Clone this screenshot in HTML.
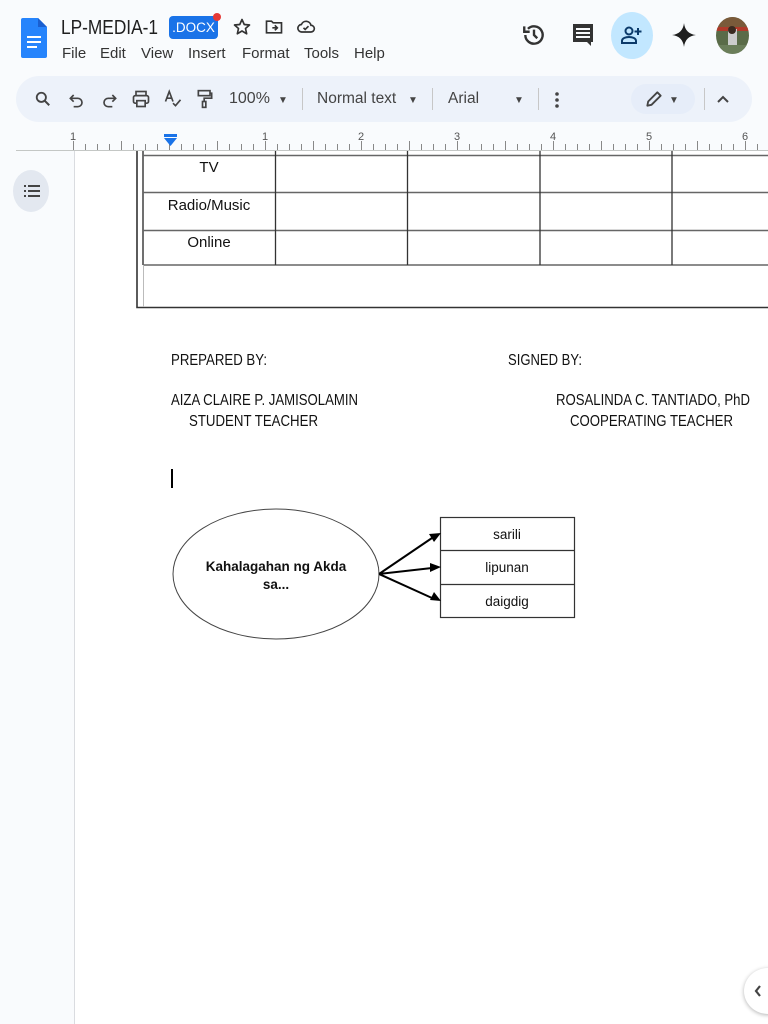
<!DOCTYPE html>
<html><head><meta charset="utf-8">
<style>
*{margin:0;padding:0;box-sizing:border-box}
body{width:768px;height:1024px;overflow:hidden;background:#f9fbfd;font-family:"Liberation Sans",Arial,sans-serif;position:relative;color:#1f1f1f}
.abs{position:absolute}
.menu span{position:absolute;top:45px;font-size:15px;color:#333}
.tb{position:absolute;left:16px;top:76px;width:736px;height:46px;border-radius:23px;background:#edf2fa}
.tbt{position:absolute;top:90px;font-size:15.5px;color:#444}
.sep{position:absolute;top:88px;width:1px;height:22px;background:#c7c7c7}
</style></head><body>
<svg class="abs" style="left:20px;top:17px" width="28" height="42" viewBox="0 0 28 42">
<path d="M3 1h15l9 9v29a2 2 0 0 1-2 2H3a2 2 0 0 1-2-2V3a2 2 0 0 1 2-2z" fill="#2684fc"/>
<path d="M18 1v9h9z" fill="#1a5fd0"/>
<rect x="7" y="19" width="14" height="2" fill="#fff"/><rect x="7" y="24" width="14" height="2" fill="#fff"/><rect x="7" y="29" width="10" height="2" fill="#fff"/>
</svg>
<svg class="abs" style="left:60px;top:12px" width="105" height="30"><text x="1" y="22" font-family="Liberation Sans,Arial,sans-serif" font-size="20" fill="#1f1f1f" textLength="97" lengthAdjust="spacingAndGlyphs">LP-MEDIA-1</text></svg>
<div class="abs" style="left:169px;top:16px;width:49px;height:23px;background:#1a73e8;border-radius:4px;color:#fff;font-size:13.5px;line-height:23px;text-align:center">.DOCX</div>
<div class="abs" style="left:213px;top:13px;width:8px;height:8px;border-radius:50%;background:#e53935"></div>
<svg class="abs" style="left:232px;top:17px" width="20" height="20" viewBox="0 0 24 24"><path d="M12 3l2.7 6 6.3.6-4.8 4.2 1.4 6.3L12 16.8 6.4 20.1l1.4-6.3L3 9.6l6.3-.6z" fill="none" stroke="#333" stroke-width="2" stroke-linejoin="round"/></svg>
<svg class="abs" style="left:264px;top:17px" width="20" height="20" viewBox="0 0 24 24"><path d="M3 5h6l2 2h10v12H3z" fill="none" stroke="#333" stroke-width="2"/><path d="M10 13h6M13 10l3 3-3 3" fill="none" stroke="#333" stroke-width="2"/></svg>
<svg class="abs" style="left:296px;top:17px" width="20" height="20" viewBox="0 0 24 24"><path d="M7 18h11a4 4 0 0 0 0-8 6 6 0 0 0-11.5-1A4.5 4.5 0 0 0 7 18z" fill="none" stroke="#333" stroke-width="2"/><path d="M9 13l2 2 4-4" fill="none" stroke="#333" stroke-width="2"/></svg>
<div class="menu"><span style="left:62px">File</span><span style="left:100px">Edit</span><span style="left:141px">View</span><span style="left:188px">Insert</span><span style="left:242px">Format</span><span style="left:304px">Tools</span><span style="left:354px">Help</span></div>
<svg class="abs" style="left:521px;top:22px" width="26" height="26" viewBox="0 0 24 24"><path d="M4 12a8 8 0 1 0 2.4-5.7" fill="none" stroke="#333" stroke-width="2.2"/><path d="M3 4v5h5" fill="none" stroke="#333" stroke-width="2.2"/><path d="M12 7v5l3 3" fill="none" stroke="#333" stroke-width="2.2"/></svg>
<svg class="abs" style="left:571px;top:22px" width="24" height="26" viewBox="0 0 24 26"><path d="M2 2h20v18h-2v4l-4-4H2z" fill="#333"/><rect x="5" y="6" width="14" height="2" fill="#f9fbfd"/><rect x="5" y="10" width="14" height="2" fill="#f9fbfd"/><rect x="5" y="14" width="14" height="2" fill="#f9fbfd"/></svg>
<div class="abs" style="left:611px;top:12px;width:42px;height:47px;border-radius:50%;background:#c2e7ff"></div>
<svg class="abs" style="left:621px;top:25px" width="22" height="20" viewBox="0 0 22 20"><circle cx="8" cy="6" r="3.5" fill="none" stroke="#0b3a6a" stroke-width="2"/><path d="M1 18v-2c0-3 4-4 7-4s7 1 7 4v2z" fill="none" stroke="#0b3a6a" stroke-width="2"/><path d="M17 3v7M13.5 6.5h7" stroke="#0b3a6a" stroke-width="2"/></svg>
<svg class="abs" style="left:671px;top:22px" width="26" height="26" viewBox="0 0 24 24"><path d="M12 1C12.8 7.5 16.5 11.2 23 12 16.5 12.8 12.8 16.5 12 23 11.2 16.5 7.5 12.8 1 12 7.5 11.2 11.2 7.5 12 1z" fill="#1f1f1f"/></svg>
<svg class="abs" style="left:716px;top:17px" width="33" height="37" viewBox="0 0 33 37"><defs><clipPath id="c"><ellipse cx="16.5" cy="18.5" rx="16.5" ry="18.5"/></clipPath></defs><g clip-path="url(#c)"><rect width="33" height="37" fill="#5a6b48"/><rect y="0" width="33" height="10" fill="#7a5a3a"/><rect y="10" width="33" height="4" fill="#b03a2a"/><rect x="12" y="12" width="9" height="25" fill="#ccc"/><circle cx="16" cy="13" r="4" fill="#3a2a20"/><rect y="28" width="33" height="9" fill="#6b7e5a"/></g></svg>
<div class="tb"></div>
<svg class="abs" style="left:33px;top:89px" width="20" height="20" viewBox="0 0 24 24"><circle cx="10" cy="10" r="5.5" fill="none" stroke="#444" stroke-width="2.2"/><path d="M14 14l5.5 5.5" stroke="#444" stroke-width="2.4"/></svg>
<svg class="abs" style="left:67px;top:90px" width="20" height="20" viewBox="0 0 24 24"><path d="M8 6L4 10l4 4" fill="none" stroke="#444" stroke-width="2"/><path d="M4 10h9a5 5 0 0 1 0 10H8" fill="none" stroke="#444" stroke-width="2"/></svg>
<svg class="abs" style="left:99px;top:90px" width="20" height="20" viewBox="0 0 24 24"><path d="M16 6l4 4-4 4" fill="none" stroke="#444" stroke-width="2"/><path d="M20 10h-9a5 5 0 0 0 0 10h5" fill="none" stroke="#444" stroke-width="2"/></svg>
<svg class="abs" style="left:131px;top:89px" width="20" height="20" viewBox="0 0 24 24"><rect x="6" y="3" width="12" height="5" fill="none" stroke="#444" stroke-width="2"/><rect x="3" y="8" width="18" height="9" rx="2" fill="none" stroke="#444" stroke-width="2"/><rect x="7" y="14" width="10" height="7" fill="#edf2fa" stroke="#444" stroke-width="2"/></svg>
<svg class="abs" style="left:163px;top:88px" width="20" height="22" viewBox="0 0 24 24"><path d="M3 15L7.5 3 12 15M5 11h5" fill="none" stroke="#444" stroke-width="2"/><path d="M12 17l3 3 6-7" fill="none" stroke="#444" stroke-width="2"/></svg>
<svg class="abs" style="left:195px;top:88px" width="20" height="22" viewBox="0 0 24 24"><rect x="4" y="2" width="14" height="6" fill="none" stroke="#444" stroke-width="2"/><path d="M18 5h2v6h-9v4" fill="none" stroke="#444" stroke-width="2"/><rect x="9" y="15" width="4" height="7" fill="none" stroke="#444" stroke-width="2"/></svg>
<div class="tbt" style="left:229px;font-size:16px">100%</div>
<div class="tbt" style="left:278px;font-size:10px;top:95px">▼</div>
<div class="sep" style="left:302px"></div>
<div class="tbt" style="left:317px">Normal text</div>
<div class="tbt" style="left:408px;font-size:10px;top:95px">▼</div>
<div class="sep" style="left:432px"></div>
<div class="tbt" style="left:448px">Arial</div>
<div class="tbt" style="left:514px;font-size:10px;top:95px">▼</div>
<div class="sep" style="left:538px"></div>
<svg class="abs" style="left:554px;top:91px" width="6" height="18" viewBox="0 0 6 18"><circle cx="3" cy="3" r="1.8" fill="#444"/><circle cx="3" cy="9" r="1.8" fill="#444"/><circle cx="3" cy="15" r="1.8" fill="#444"/></svg>
<div class="abs" style="left:631px;top:84px;width:64px;height:30px;border-radius:15px;background:#e6edf9"></div>
<svg class="abs" style="left:644px;top:89px" width="20" height="20" viewBox="0 0 24 24"><path d="M4 20l1-5L16 4l4 4L9 19z" fill="none" stroke="#444" stroke-width="2.2" stroke-linejoin="round"/></svg>
<div class="tbt" style="left:669px;font-size:10px;top:95px">▼</div>
<div class="sep" style="left:704px"></div>
<svg class="abs" style="left:716px;top:93px" width="14" height="12" viewBox="0 0 14 12"><path d="M2 9l5-5 5 5" fill="none" stroke="#444" stroke-width="2"/></svg>
<div class="abs" style="left:16px;top:150px;width:752px;height:1px;background:#c4c7c5"></div>
<div class="abs" style="left:73px;top:144px;width:695px;height:6px;background:repeating-linear-gradient(90deg,#888 0 1px,transparent 1px 12px)"></div>
<div class="abs" style="left:73px;top:141px;width:695px;height:9px;background:repeating-linear-gradient(90deg,#888 0 1px,transparent 1px 48px)"></div>
<div class="abs" style="top:131px;font-size:11px;color:#555;left:70px">1</div>
<div class="abs" style="top:131px;font-size:11px;color:#555;left:262px">1</div>
<div class="abs" style="top:131px;font-size:11px;color:#555;left:358px">2</div>
<div class="abs" style="top:131px;font-size:11px;color:#555;left:454px">3</div>
<div class="abs" style="top:131px;font-size:11px;color:#555;left:550px">4</div>
<div class="abs" style="top:131px;font-size:11px;color:#555;left:646px">5</div>
<div class="abs" style="top:131px;font-size:11px;color:#555;left:742px">6</div>
<div class="abs" style="left:164px;top:134px;width:13px;height:3px;background:#1a73e8"></div>
<svg class="abs" style="left:164px;top:138px" width="13" height="8"><path d="M0 0h13L6.5 8z" fill="#1a73e8"/></svg>
<div class="abs" style="left:74px;top:151px;width:1px;height:873px;background:#dadce0"></div>
<div class="abs" style="left:75px;top:151px;width:693px;height:873px;background:#fff"></div>
<div class="abs" style="left:13px;top:170px;width:36px;height:42px;border-radius:50%;background:#e3e8f0"></div>
<svg class="abs" style="left:24px;top:185px" width="16" height="12" viewBox="0 0 16 12"><g fill="#444"><rect x="0" y="0" width="2" height="2"/><rect x="4" y="0" width="12" height="2"/><rect x="0" y="5" width="2" height="2"/><rect x="4" y="5" width="12" height="2"/><rect x="0" y="10" width="2" height="2"/><rect x="4" y="10" width="12" height="2"/></g></svg>
<svg class="abs" style="left:0;top:0" width="768" height="1024">
<g stroke="#333" fill="none">
<path d="M137 151V307.5H768" stroke-width="1.6"/>
<path d="M143 151V265" stroke-width="1.4"/>
<path d="M143 155.5H768M143 192.5H768M143 230.5H768M143 265H768" stroke="#666" stroke-width="1.6"/>
<path d="M275.5 151V265M407.5 151V265M540 151V265M672 151V265" stroke-width="1.3"/>
<path d="M143.5 265V307" stroke="#bbb" stroke-width="1"/>
</g>
<g font-family="Liberation Sans,Arial,sans-serif" font-size="15" fill="#111" text-anchor="middle">
<text x="209" y="172">TV</text><text x="209" y="210">Radio/Music</text><text x="209" y="247">Online</text>
</g>
<g font-family="Liberation Sans,Arial,sans-serif" font-size="16" fill="#111">
<text x="171" y="365" textLength="96" lengthAdjust="spacingAndGlyphs">PREPARED BY:</text>
<text x="508" y="365" textLength="74" lengthAdjust="spacingAndGlyphs">SIGNED BY:</text>
<text x="171" y="405" textLength="187" lengthAdjust="spacingAndGlyphs">AIZA CLAIRE P. JAMISOLAMIN</text>
<text x="189" y="426" textLength="129" lengthAdjust="spacingAndGlyphs">STUDENT TEACHER</text>
<text x="556" y="405" textLength="194" lengthAdjust="spacingAndGlyphs">ROSALINDA C. TANTIADO, PhD</text>
<text x="570" y="426" textLength="163" lengthAdjust="spacingAndGlyphs">COOPERATING TEACHER</text>
</g>
<rect x="171" y="469" width="2" height="19" fill="#000"/>
<ellipse cx="276" cy="574" rx="103" ry="65" fill="none" stroke="#444" stroke-width="1"/>
<g font-family="Liberation Sans,Arial,sans-serif" font-size="13.5" font-weight="bold" fill="#111" text-anchor="middle">
<text x="276" y="571">Kahalagahan ng Akda</text><text x="276" y="589">sa...</text>
</g>
<g stroke="#333" fill="none" stroke-width="1.2"><rect x="440.5" y="517.5" width="134" height="100"/><path d="M440 550.5h135M440 584.5h135"/></g>
<g font-family="Liberation Sans,Arial,sans-serif" font-size="13.5" fill="#111" text-anchor="middle">
<text x="507" y="539">sarili</text><text x="507" y="572">lipunan</text><text x="507" y="606">daigdig</text>
</g>
<g stroke="#000" stroke-width="2"><path d="M379 574L432 538M379 574L432 568M379 574L432 598"/></g>
<g fill="#000"><path d="M441 533l-12 1 5 8z"/><path d="M441 567l-11-4v9z"/><path d="M441 601l-7-9-4 8z"/></g>
</svg>
<div class="abs" style="left:744px;top:968px;width:48px;height:46px;border-radius:50%;background:#fff;box-shadow:0 1px 4px rgba(0,0,0,.3)"></div>
<svg class="abs" style="left:753px;top:984px" width="10" height="14" viewBox="0 0 10 14"><path d="M7 2L3 7l4 5" fill="none" stroke="#444" stroke-width="2.2"/></svg>
</body></html>
